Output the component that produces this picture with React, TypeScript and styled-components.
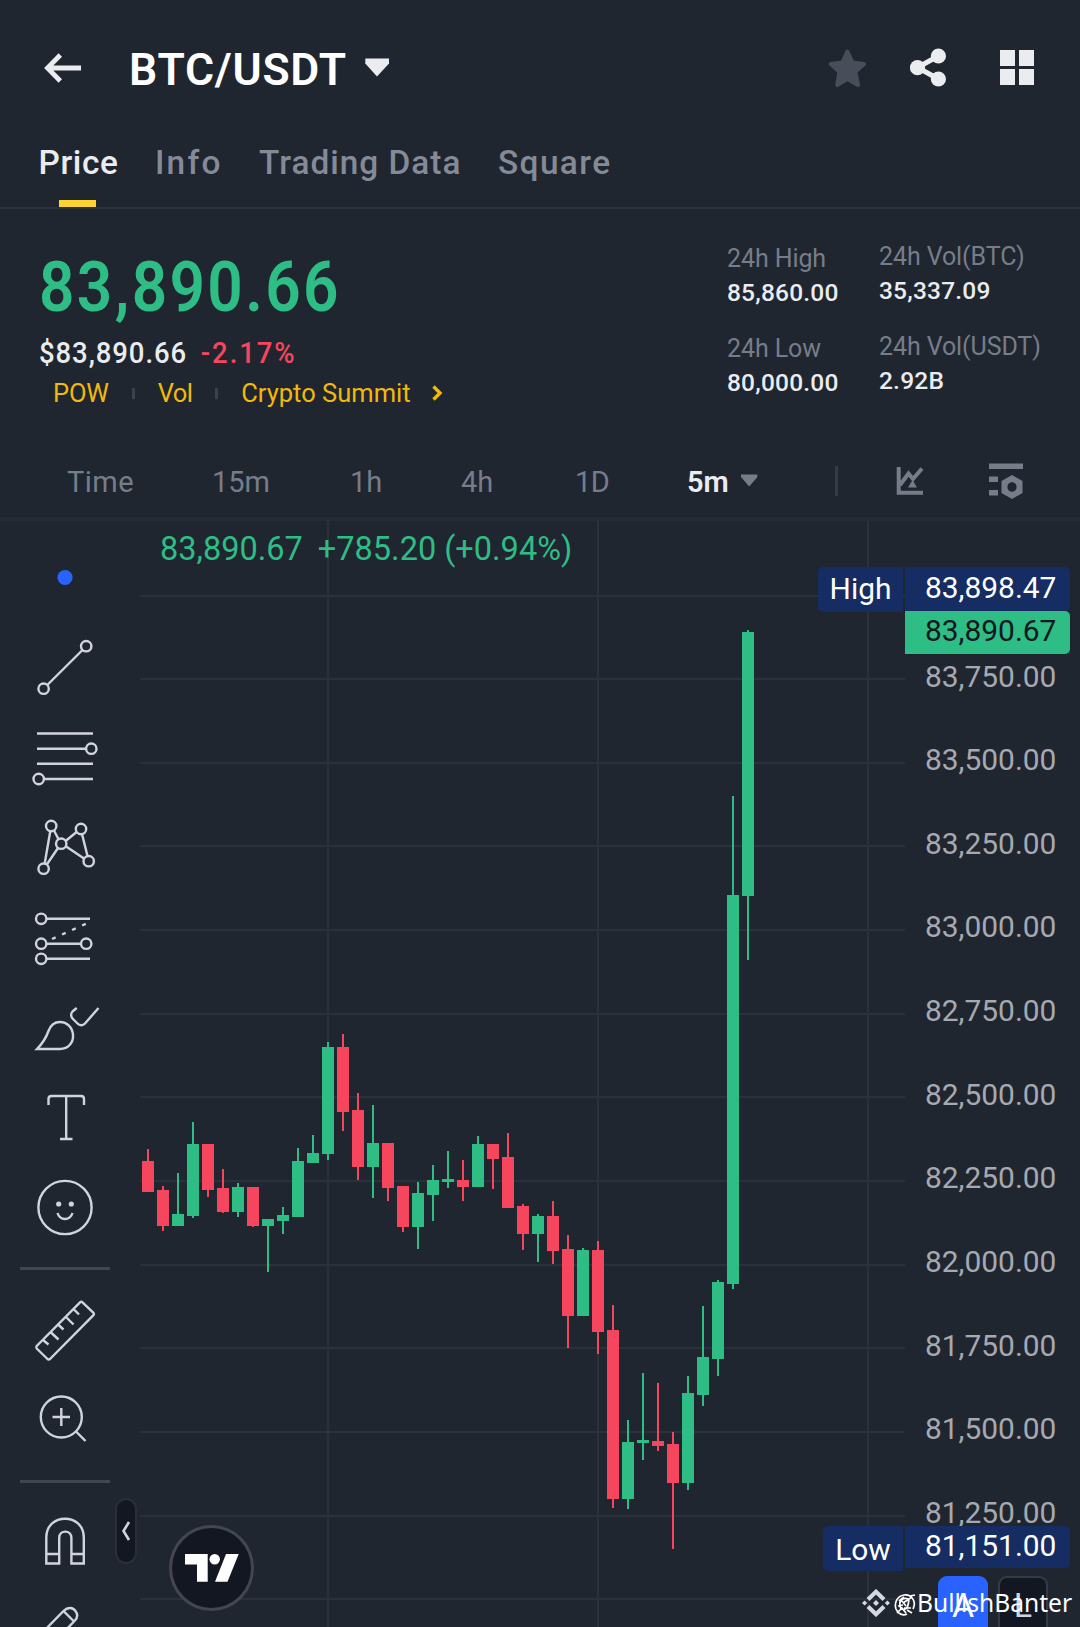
import React from "react";
import styled, { createGlobalStyle } from "styled-components";

const c = {
  bg: "#202630",
  line: "#2b313b",
  text: "#eaecef",
  muted: "#848a98",
  up: "#2ebd85",
  down: "#f6465d",
  gold: "#f0b90b",
  badge: "#152d62",
  icon: "#d1d4dc",
};

const Global = createGlobalStyle`
  * { box-sizing: border-box; }
  body { margin: 0; background: ${c.bg}; font-family: Roboto, "Liberation Sans", sans-serif; }
`;

const Screen = styled.div`
  width: 1080px;
  height: 1627px;
  overflow: hidden;
  background: ${c.bg};
  color: ${c.text};
  white-space: pre;
`;

/* ---------- header ---------- */
const Header = styled.header`
  display: flex;
  align-items: center;
  height: 136px;
  padding: 0 46px 0 44px;
`;
const Title = styled.h1`
  margin: 3px 0 0 47px;
  font-size: 44.5px;
  line-height: 60px;
  font-weight: 600;
  letter-spacing: 0.75px;
  color: #fff;
`;
const Caret = styled.svg`
  margin-left: 18px;
`;
const HeaderActions = styled.div`
  display: flex;
  align-items: center;
  margin-left: auto;
`;
const ActionIcon = styled.svg<{ $gap?: number }>`
  display: block;
  margin-left: ${(p) => p.$gap ?? 0}px;
`;

/* ---------- tabs ---------- */
const Tabs = styled.nav`
  display: flex;
  gap: 36.5px;
  height: 73px;
  padding-left: 38.5px;
  border-bottom: 2px solid ${c.line};
`;
const Tab = styled.div<{ $active?: boolean; $spacing: number }>`
  display: flex;
  flex-direction: column;
  align-items: center;
  font-size: 33.4px;
  line-height: 54px;
  font-weight: 500;
  letter-spacing: ${(p) => p.$spacing}px;
  color: ${(p) => (p.$active ? c.text : c.muted)};
`;
const TabMark = styled.div`
  width: 37px;
  height: 8px;
  margin: 10px 1px 0 0;
  background: #fcd535;
`;

/* ---------- summary ---------- */
const Summary = styled.section`
  display: flex;
  height: 238px;
  padding-left: 39px;
`;
const PriceColumn = styled.div`
  width: 688px;
  padding-top: 38px;
`;
const LastPrice = styled.div`
  font-size: 71px;
  line-height: 80px;
  font-weight: 600;
  letter-spacing: 2.7px;
  transform: scaleX(0.875);
  transform-origin: 0 50%;
  color: ${c.up};
`;
const FiatRow = styled.div`
  display: flex;
  gap: 15px;
  margin-top: 6px;
  font-size: 30px;
  line-height: 40px;
  font-weight: 500;
  letter-spacing: 1px;
  transform: scaleX(0.917);
  transform-origin: 0 50%;
`;
const Change = styled.span`
  letter-spacing: 2.1px;
  color: ${c.down};
`;
const TagRow = styled.div`
  display: flex;
  align-items: center;
  margin-top: 2px;
  padding-left: 14px;
  font-size: 25.5px;
  line-height: 36px;
  color: ${c.gold};
`;
const Tag = styled.span<{ $spacing?: number }>`
  letter-spacing: ${(p) => p.$spacing ?? 0}px;
`;
const TagSeparator = styled.i`
  width: 3px;
  height: 11px;
  margin: 0 23px;
  background: #3a424e;
`;
const StatColumn = styled.div<{ $width: number; $top: number }>`
  display: flex;
  flex-direction: column;
  gap: 20px;
  width: ${(p) => p.$width}px;
  padding-top: ${(p) => p.$top}px;
`;
const Stat = styled.div`
  font-size: 25px;
  line-height: 35px;
`;
const StatLabel = styled.div`
  padding-top: 1px;
  height: 35px;
  letter-spacing: -0.1px;
  color: #767d89;
`;
const StatValue = styled.div`
  font-weight: 500;
  font-size: 24.5px;
  letter-spacing: 0.2px;
`;

/* ---------- intervals ---------- */
const Intervals = styled.section`
  display: grid;
  grid-template-columns: 145px 138px 111px 114px 112px 148px 61px 92px 40px;
  align-items: center;
  height: 74px;
  padding-left: 67px;
  border-bottom: 4px solid #262c36;
`;
const Interval = styled.div<{ $active?: boolean; $spacing?: number }>`
  display: flex;
  align-items: center;
  gap: 12px;
  font-size: 29px;
  line-height: 36px;
  letter-spacing: ${(p) => p.$spacing ?? 0}px;
  font-weight: ${(p) => (p.$active ? 600 : 400)};
  color: ${(p) => (p.$active ? c.text : "#767d89")};
`;
const IntervalDivider = styled.i`
  width: 3px;
  height: 30px;
  margin-bottom: 2px;
  background: #343b46;
`;
const IntervalIcon = styled.svg`
  margin-bottom: 3px;
`;

/* ---------- chart ---------- */
const Chart = styled.main`
  position: relative;
  display: grid;
  grid-template-columns: 140px 765px 175px;
  height: 1106px;
`;
const Toolbar = styled.aside`
  display: flex;
  flex-direction: column;
  height: 1106px;
  overflow: hidden;
`;
const Tool = styled.svg`
  display: block;
  flex: none;
  fill: none;
  stroke: ${c.icon};
  stroke-width: 2.4;
`;
const ToolDivider = styled.hr`
  flex: none;
  width: 90px;
  height: 3px;
  margin: 15px 0 14px 20px;
  border: 0;
  background: #434651;
`;
const Plot = styled.svg`
  display: block;
`;
const Axis = styled.div`
  padding: 113.6px 0 0 20px;
`;
const AxisLabel = styled.div`
  height: 83.63px;
  font-size: 29.9px;
  line-height: 83.63px;
  color: #a6a9b1;
`;
const Legend = styled.div`
  position: absolute;
  left: 160px;
  top: 7px;
  display: flex;
  gap: 15px;
  font-size: 32.5px;
  line-height: 42px;
  color: ${c.up};
`;
const MarkRow = styled.div<{ $top: number }>`
  position: absolute;
  right: 10px;
  top: ${(p) => p.$top}px;
  display: flex;
  align-items: flex-start;
  gap: 2px;
  font-size: 29.9px;
  color: #fff;
`;
const MarkName = styled.div<{ $width: number; $drop?: number }>`
  width: ${(p) => p.$width}px;
  height: 45px;
  line-height: 43px;
  padding-top: ${(p) => p.$drop ?? 0}px;
  text-align: center;
  border-radius: 5px 0 0 5px;
  background: ${c.badge};
`;
const MarkValue = styled.div<{ $tone?: "up"; $height: number }>`
  width: 165px;
  height: ${(p) => p.$height}px;
  padding-left: 20px;
  line-height: ${(p) => p.$height - 2.5}px;
  border-radius: 0 5px 5px 0;
  background: ${(p) => (p.$tone ? c.up : c.badge)};
  color: ${(p) => (p.$tone ? "#131722" : "#fff")};
`;
const Collapse = styled.div`
  position: absolute;
  left: 115px;
  top: 977px;
  display: grid;
  place-items: center;
  width: 22px;
  height: 66px;
  border: 2px solid #2a2e39;
  border-radius: 11px;
  background: #131722;
`;
const ChartLogo = styled.div`
  position: absolute;
  left: 169px;
  top: 1004px;
  display: grid;
  place-items: center;
  width: 85px;
  height: 86px;
  border: 3px solid #434651;
  border-radius: 50%;
  background: #131722;
`;
const ScaleButtons = styled.div`
  position: absolute;
  left: 938px;
  top: 1055px;
  display: flex;
  gap: 10px;
`;
const ScaleButton = styled.div<{ $on?: boolean }>`
  width: 50px;
  height: 60px;
  padding-top: 7px;
  text-align: center;
  font-size: 34px;
  line-height: 40px;
  border-radius: 9px;
  border: 2px solid ${(p) => (p.$on ? "#2962ff" : "#363a45")};
  background: ${(p) => (p.$on ? "#2962ff" : "#131722")};
  color: ${(p) => (p.$on ? "#fff" : c.icon)};
`;
const Watermark = styled.div`
  position: absolute;
  left: 862px;
  top: 1068px;
  display: flex;
  align-items: center;
  font-family: "Noto Sans", Roboto, sans-serif;
  font-size: 24.6px;
  line-height: 28px;
  color: #fff;
`;
const WatermarkAvatar = styled.svg`
  margin: 4px 1px 0 4px;
`;

/* open/close body edges and wick ends, in pane pixels: [up, high, top, bottom, low] */
type Candle = [0 | 1, number, number, number, number];
const q = (base: number, rows: Candle[]): Candle[] =>
  rows.map(([u, ...v]) => [u, ...v.map((n) => base + n / 3)] as Candle);

const candles: Candle[] = [
  ...q(1020, [
    [0, 387, 423, 516, 516], [0, 498, 510, 618, 633], [1, 459, 582, 618, 618],
    [1, 306, 372, 588, 594], [0, 372, 372, 510, 531], [0, 447, 504, 576, 579],
    [1, 489, 501, 576, 591], [0, 501, 501, 618, 621], [1, 597, 597, 618, 756],
    [1, 561, 585, 603, 642], [1, 384, 423, 591, 591], [1, 345, 399, 429, 429],
    [1, 66, 81, 402, 420], [0, 42, 81, 276, 333], [0, 219, 270, 441, 480],
    [1, 255, 369, 441, 534], [0, 369, 369, 504, 543], [0, 498, 498, 621, 636],
  ]),
  ...q(1100, [
    [1, 246, 279, 381, 447], [1, 195, 240, 285, 363], [1, 153, 237, 246, 264],
    [0, 180, 240, 261, 303], [1, 108, 132, 261, 261], [0, 132, 132, 177, 267],
    [0, 99, 171, 324, 324], [0, 312, 318, 402, 450], [1, 342, 348, 402, 486],
    [0, 303, 348, 453, 492], [0, 405, 447, 648, 744], [1, 444, 450, 648, 648],
    [0, 423, 450, 696, 762],
  ]),
  ...q(1200, [
    [0, 315, 390, 897, 924], [1, 660, 726, 897, 927], [1, 519, 720, 729, 780],
    [0, 549, 723, 738, 753], [0, 696, 732, 849, 1047], [1, 528, 579, 849, 870],
    [1, 318, 471, 585, 618], [1, 240, 246, 477, 528],
  ]),
  [1, 796, 894.5, 1284, 1289],
  [1, 629.5, 632, 896, 960],
];

const gridY = Array.from({ length: 13 }, (_, i) => 595.6 + i * 83.63);
const gridX = [328, 598, 868];
const axis = [
  "83,750.00", "83,500.00", "83,250.00", "83,000.00", "82,750.00", "82,500.00",
  "82,250.00", "82,000.00", "81,750.00", "81,500.00", "81,250.00",
];

const Ring = ({ x, y }: { x: number; y: number }) => <circle cx={x} cy={y} r="5.2" />;

/* every tool is drawn in the pane's coordinates, in a slot that runs from y0 to y1 */
const Slot = ({ y0, y1, children }: { y0: number; y1: number; children: React.ReactNode }) => (
  <Tool width="140" height={y1 - y0} viewBox={`0 ${y0} 140 ${y1 - y0}`}>
    {children}
  </Tool>
);

export default function App() {
  return (
    <Screen>
      <Global />
      <Header>
        <svg width="38" height="32" viewBox="44 52 38 32" fill="none" stroke={c.text} strokeWidth="4.8">
          <path d="M81 68H48M60.3 55 47.5 68 60.3 81" />
        </svg>
        <Title>BTC/USDT</Title>
        <Caret width="24" height="20" viewBox="365 58 24 20" fill={c.text}>
          <path d="M365.3 58.5H389V63.5L377 76.5 365.3 63.5Z" />
        </Caret>
        <HeaderActions>
          <ActionIcon width="38" height="40" viewBox="828 48 38 40" fill="#474d59" stroke="#474d59" strokeWidth="4" strokeLinejoin="round">
            <path d="M847.4 51.5 852.5 62.6 864 64 855.4 71.8 858 85 847.4 79 837.2 85 839.4 71.8 830.8 64 842.4 62.6Z" />
          </ActionIcon>
          <ActionIcon $gap={43} width="38" height="40" viewBox="909 48 38 40" fill={c.text}>
            <path d="M938.4 56 917.5 67.5 938.4 79" fill="none" stroke={c.text} strokeWidth="5" />
            <circle cx="938.4" cy="56" r="7.6" />
            <circle cx="917.5" cy="67.7" r="7.6" />
            <circle cx="938.4" cy="79" r="7.6" />
          </ActionIcon>
          <ActionIcon $gap={53} width="34" height="36" viewBox="1000 50 34 36" fill={c.text}>
            <path d="M1000 50h15v16h-15zM1019 50h15v16h-15zM1000 69h15v16h-15zM1019 69h15v16h-15z" />
          </ActionIcon>
        </HeaderActions>
      </Header>

      <Tabs>
        <Tab $active $spacing={0.6}>Price<TabMark /></Tab>
        <Tab $spacing={2.2}>Info</Tab>
        <Tab $spacing={1}>Trading Data</Tab>
        <Tab $spacing={1.4}>Square</Tab>
      </Tabs>

      <Summary>
        <PriceColumn>
          <LastPrice>83,890.66</LastPrice>
          <FiatRow>
            <span>$83,890.66</span>
            <Change>-2.17%</Change>
          </FiatRow>
          <TagRow>
            <Tag $spacing={-0.2}>POW</Tag>
            <TagSeparator />
            <Tag $spacing={-0.6}>Vol</Tag>
            <TagSeparator />
            <Tag $spacing={0}>Crypto Summit</Tag>
            <ActionIcon $gap={21} width="12" height="18" viewBox="431 384 12 18" fill="none" stroke={c.gold} strokeWidth="3.4">
              <path d="M432.5 386.5 439 393 432.5 399.5" />
            </ActionIcon>
          </TagRow>
        </PriceColumn>
        <StatColumn $width={152} $top={31}>
          <Stat>
            <StatLabel>24h High</StatLabel>
            <StatValue>85,860.00</StatValue>
          </Stat>
          <Stat>
            <StatLabel>24h Low</StatLabel>
            <StatValue>80,000.00</StatValue>
          </Stat>
        </StatColumn>
        <StatColumn $width={200} $top={29}>
          <Stat>
            <StatLabel>24h Vol(BTC)</StatLabel>
            <StatValue>35,337.09</StatValue>
          </Stat>
          <Stat>
            <StatLabel>24h Vol(USDT)</StatLabel>
            <StatValue>2.92B</StatValue>
          </Stat>
        </StatColumn>
      </Summary>

      <Intervals>
        <Interval $spacing={0.5}>Time</Interval>
        <Interval>15m</Interval>
        <Interval>1h</Interval>
        <Interval>4h</Interval>
        <Interval $spacing={-0.5}>1D</Interval>
        <Interval $active>
          5m
          <IntervalIcon width="17" height="13" viewBox="741 473 17 13" fill="#767d89">
            <path d="M741 473.4H757.4V476L749.2 485.4 741 476Z" />
          </IntervalIcon>
        </Interval>
        <IntervalDivider />
        <IntervalIcon width="28" height="30" viewBox="896 465 28 30" fill="none" stroke="#767d89" strokeWidth="4">
          <path d="M898.7 466V491.7H923M900 484 908.5 472.5 913 478 922 467.5" />
          <path d="M912.5 479 917 486.5H908Z" fill="#767d89" stroke="none" />
        </IntervalIcon>
        <IntervalIcon width="36" height="38" viewBox="988 462 36 38" fill="#767d89">
          <path d="M989 463.5H1023V469H989zM989 476.5H998V482H989zM989 490H998V495.500H989z" />
          <path fillRule="evenodd" d="M1012 475 1022.5 481V493L1012 499 1001.500 493V481ZM1012 482.200A4.600 4.800 0 1 0 1012 491.800A4.600 4.800 0 1 0 1012 482.200Z" />
        </IntervalIcon>
      </Intervals>

      <Chart>
        <Toolbar>
          <Slot y0={521} y1={622}>
            <circle cx="65" cy="577.5" r="7.6" fill="#2962ff" stroke="none" />
          </Slot>
          <Slot y0={622} y1={712}>
            <Ring x={43.6} y={688.7} />
            <Ring x={86.2} y={646.2} />
            <path d="M47.300 685 82.500 650" />
          </Slot>
          <Slot y0={712} y1={802}>
            <path d="M37 733.500H93M37 748.700H86M37 763.800H93M44 779H93" />
            <Ring x={91.3} y={748.7} />
            <Ring x={38.7} y={779} />
          </Slot>
          <Slot y0={802} y1={892}>
            <Ring x={51.2} y={826} />
            <Ring x={81} y={829} />
            <Ring x={61.2} y={843.7} />
            <Ring x={43.6} y={868.7} />
            <Ring x={88.7} y={861.200} />
            <path d="M50.300 831 44.700 863.500M54 830.500 58.500 839.200M65.600 841 76.600 832M82 834 87.500 856M65.800 846.200 84 858.500M58 848 46.800 864.500" />
          </Slot>
          <Slot y0={892} y1={984}>
            <Ring x={41.2} y={918.8} />
            <Ring x={41.2} y={943.7} />
            <Ring x={86.2} y={943.7} />
            <Ring x={41.2} y={958.800} />
            <path d="M46.500 918.800H90M46.500 943.700H81M46.500 958.800H90" />
            <path d="M52 939 87 923.300" strokeDasharray="4 7" />
          </Slot>
          <Slot y0={984} y1={1072}>
            <path d="M37 1049H60C68.500 1049 73.500 1042.500 73 1035C72.500 1027.500 67 1022 60 1022C54 1022 50.500 1025.500 48.500 1031C46 1038 42 1044 37 1049Z" />
            <path d="M76.700 1008 72.500 1011.500C70.500 1013.500 70.800 1017 73 1019L77.500 1023.500C80 1026 83 1025.500 85 1023.500L98.500 1008" />
          </Slot>
          <Slot y0={1072} y1={1162}>
            <path d="M48.500 1105V1099Q48.500 1096 51.500 1096H81Q84 1096 84 1099V1105M66.200 1096V1139M60 1139H72.500" />
          </Slot>
          <Slot y0={1162} y1={1252}>
            <circle cx="65" cy="1207.500" r="26.600" />
            <circle cx="58.700" cy="1204" r="2.600" fill={c.icon} stroke="none" />
            <circle cx="71.300" cy="1204" r="2.600" fill={c.icon} stroke="none" />
            <path d="M57.500 1213C60 1221 70 1221 72.500 1213" />
          </Slot>
          <ToolDivider />
          <Slot y0={1284} y1={1375}>
            <path strokeLinejoin="round" d="M80 1302.300Q81.200 1301.200 82.500 1302.300L93.500 1312.800Q94.500 1314 93.500 1315.200L50 1359Q48.700 1360 47.500 1359L36.700 1348.500Q35.700 1347.300 36.700 1346ZM43 1340 48.500 1344.500M50.500 1332 58.500 1339.500M58 1324.500 63.500 1329.500M65.500 1316.500 73.500 1324.500M73.500 1309 79 1314.500" />
          </Slot>
          <Slot y0={1375} y1={1465}>
            <circle cx="61.300" cy="1417" r="20.500" />
            <path d="M52.500 1417H70M61.300 1408V1426M76 1431.500 85.500 1441" />
          </Slot>
          <ToolDivider />
          <Slot y0={1497} y1={1590}>
            <path d="M46.300 1563.500V1537.500C46.300 1512.500 83.800 1512.500 83.800 1537.500V1563.500H71.400V1538C71.400 1529.500 59.200 1529.500 59.200 1538V1563.500ZM46.300 1554H59.200M71.400 1554H83.800" />
          </Slot>
          <Slot y0={1590} y1={1627}>
            <path d="M38 1637 63.500 1611C68 1606.500 73 1607.500 75.500 1611C78.500 1615 77.500 1618 74.500 1621L60 1636M63.500 1611 74 1621.500" />
          </Slot>
        </Toolbar>

        <Plot width="765" height="1106" viewBox="140 521 765 1106" shapeRendering="crispEdges">
          {gridY.map((y) => (
            <rect key={y} x="140" y={Math.round(y) - 1} width="765" height="2" fill={c.line} />
          ))}
          {gridX.map((x) => (
            <rect key={x} x={x - 1} y="521" width="2" height="1106" fill={c.line} />
          ))}
          {candles.map(([up, high, top, bottom, low], i) => {
            const x = 148 + i * 15;
            return (
              <g key={x} fill={up ? c.up : c.down}>
                <rect x={x - 1} y={high} width="2" height={low - high} />
                <rect x={x - 6} y={top} width="12" height={bottom - top} />
              </g>
            );
          })}
        </Plot>

        <Axis>
          {axis.map((a) => (
            <AxisLabel key={a}>{a}</AxisLabel>
          ))}
        </Axis>

        <Legend>
          <span>83,890.67</span>
          <span>+785.20 (+0.94%)</span>
        </Legend>

        <MarkRow $top={46}>
          <MarkName $width={85}>High</MarkName>
          <MarkValue $height={44}>83,898.47</MarkValue>
        </MarkRow>
        <MarkRow $top={90}>
          <MarkValue $tone="up" $height={43}>83,890.67</MarkValue>
        </MarkRow>
        <MarkRow $top={1005}>
          <MarkName $width={80} $drop={2}>Low</MarkName>
          <MarkValue $height={42}>81,151.00</MarkValue>
        </MarkRow>

        <Collapse>
          <svg width="10" height="20" viewBox="0 0 10 20" fill="none" stroke={c.icon} strokeWidth="2.600">
            <path d="M8 1 2.500 10 8 19" />
          </svg>
        </Collapse>

        <ChartLogo>
          <svg width="54" height="28" viewBox="185 1555.500 54 28" fill="#fff">
            <path d="M185 1555.500H207.700V1583.200H197V1566H185ZM226 1555.500H238.700L227.500 1583.200H215Z" />
            <circle cx="214.700" cy="1560.700" r="5.200" />
          </svg>
        </ChartLogo>

        <ScaleButtons>
          <ScaleButton $on>A</ScaleButton>
          <ScaleButton>L</ScaleButton>
        </ScaleButtons>

        <Watermark>
          <svg width="28" height="28" viewBox="0 0 28 28" fill="none" stroke="#d5d8e2" strokeWidth="4.200">
            <path d="M6 10.500 14 2.800 22 10.500M6 17.500 14 25.200 22 17.500" />
            <path d="M14 11 17 14 14 17 11 14ZM2.600 11.400 5.200 14 2.600 16.600 0 14ZM25.400 11.400 28 14 25.400 16.600 22.800 14Z" fill="#d5d8e2" stroke="none" />
          </svg>
          <WatermarkAvatar width="22" height="24" viewBox="0 0 22 24" fill="none" stroke="#fff" strokeWidth="1.700">
            <path d="M19 16C23 8 17 1 10 2C3 3 0 10 2 16C4 21 9 23 13 21M14 6C9 4 5 8 6 13C7 18 13 17 14 12L15 7M5 8 10 4M9 10 18 4M3 20 8 15 12 20M8 8 12 13M13 17 18 20M16 3 21 2M4 13 9 12M10 15 17 15" />
          </WatermarkAvatar>
          <span>BullishBanter</span>
        </Watermark>
      </Chart>
    </Screen>
  );
}
